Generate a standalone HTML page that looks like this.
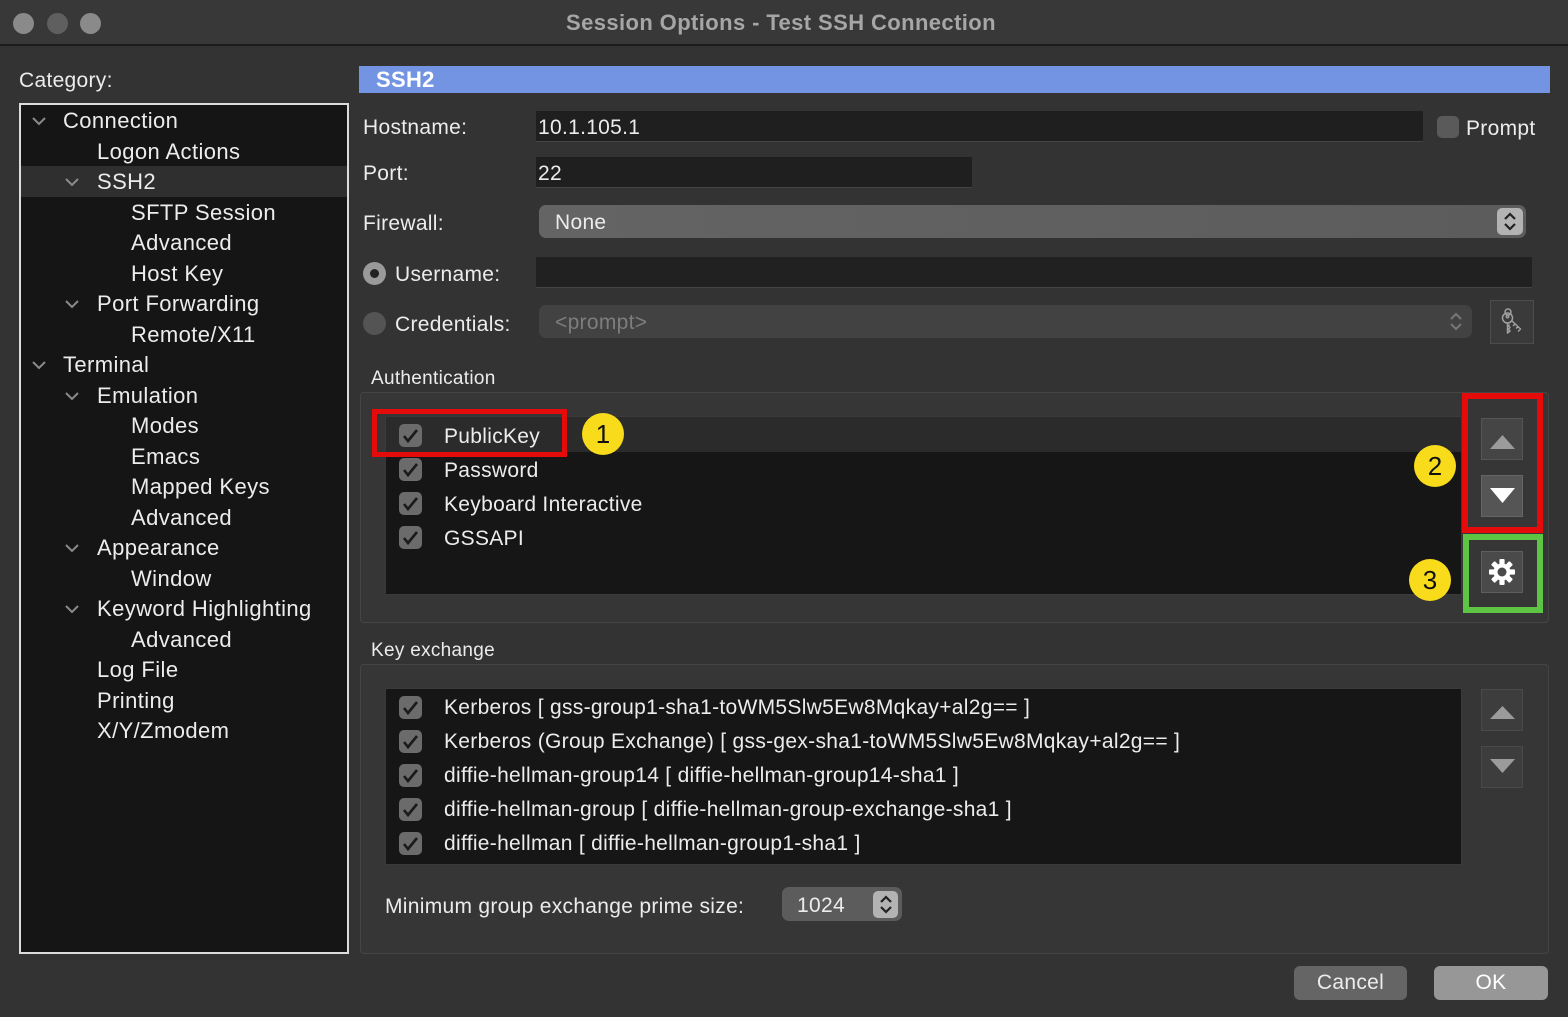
<!DOCTYPE html>
<html><head><meta charset="utf-8">
<style>
*{margin:0;padding:0;box-sizing:border-box}
body{width:1568px;height:1017px;background:#333333;font-family:"Liberation Sans",sans-serif;color:#ececec;position:relative;overflow:hidden}
.a{position:absolute}
.t{position:absolute;white-space:nowrap;font-size:21px;line-height:24px;letter-spacing:0.3px;padding-top:1px}
.tree .t{font-size:22px;letter-spacing:0.4px}
.chev{position:absolute;width:16px;height:10px}
.cb{position:absolute;width:23px;height:23px;border-radius:5px;background:#6b6b6b}
.btn{position:absolute;width:42px;height:42px;background:#454545;border:1px solid #555}
.circ{position:absolute;width:42px;height:42px;border-radius:50%;background:#f8dc1c;color:#111;font-size:26px;text-align:center;line-height:42px}
</style></head><body>
<div class="a" style="left:0;top:0;width:1568px;height:46px;background:#383838;border-bottom:2px solid #1c1c1c"></div>
<div class="a" style="left:13px;top:13px;width:21px;height:21px;border-radius:50%;background:#8a8a8a"></div>
<div class="a" style="left:47px;top:13px;width:21px;height:21px;border-radius:50%;background:#5f5f5f"></div>
<div class="a" style="left:80px;top:13px;width:21px;height:21px;border-radius:50%;background:#8a8a8a"></div>
<div class="t" style="left:566px;top:10px;font-size:22px;font-weight:bold;color:#a6a6a6;letter-spacing:0.4px">Session Options - Test SSH Connection</div>

<div class="t" style="left:19px;top:68px">Category:</div>
<div class="a tree" style="left:19px;top:103px;width:330px;height:851px;background:#151515;border:2px solid #dcdcdc"></div>
<div class="a" style="left:21px;top:166px;width:326px;height:31px;background:#2f2f2f"></div>
<div class="tree">
<svg class="chev" style="left:31px;top:116px" viewBox="0 0 16 10"><path d="M2 2l6 6 6-6" stroke="#8a8a8a" stroke-width="2" fill="none"/></svg>
<div class="t" style="left:63px;top:108px">Connection</div>
<div class="t" style="left:97px;top:139px">Logon Actions</div>
<svg class="chev" style="left:64px;top:177px" viewBox="0 0 16 10"><path d="M2 2l6 6 6-6" stroke="#8a8a8a" stroke-width="2" fill="none"/></svg>
<div class="t" style="left:97px;top:169px">SSH2</div>
<div class="t" style="left:131px;top:200px">SFTP Session</div>
<div class="t" style="left:131px;top:230px">Advanced</div>
<div class="t" style="left:131px;top:261px">Host Key</div>
<svg class="chev" style="left:64px;top:299px" viewBox="0 0 16 10"><path d="M2 2l6 6 6-6" stroke="#8a8a8a" stroke-width="2" fill="none"/></svg>
<div class="t" style="left:97px;top:291px">Port Forwarding</div>
<div class="t" style="left:131px;top:322px">Remote/X11</div>
<svg class="chev" style="left:31px;top:360px" viewBox="0 0 16 10"><path d="M2 2l6 6 6-6" stroke="#8a8a8a" stroke-width="2" fill="none"/></svg>
<div class="t" style="left:63px;top:352px">Terminal</div>
<svg class="chev" style="left:64px;top:391px" viewBox="0 0 16 10"><path d="M2 2l6 6 6-6" stroke="#8a8a8a" stroke-width="2" fill="none"/></svg>
<div class="t" style="left:97px;top:383px">Emulation</div>
<div class="t" style="left:131px;top:413px">Modes</div>
<div class="t" style="left:131px;top:444px">Emacs</div>
<div class="t" style="left:131px;top:474px">Mapped Keys</div>
<div class="t" style="left:131px;top:505px">Advanced</div>
<svg class="chev" style="left:64px;top:543px" viewBox="0 0 16 10"><path d="M2 2l6 6 6-6" stroke="#8a8a8a" stroke-width="2" fill="none"/></svg>
<div class="t" style="left:97px;top:535px">Appearance</div>
<div class="t" style="left:131px;top:566px">Window</div>
<svg class="chev" style="left:64px;top:604px" viewBox="0 0 16 10"><path d="M2 2l6 6 6-6" stroke="#8a8a8a" stroke-width="2" fill="none"/></svg>
<div class="t" style="left:97px;top:596px">Keyword Highlighting</div>
<div class="t" style="left:131px;top:627px">Advanced</div>
<div class="t" style="left:97px;top:657px">Log File</div>
<div class="t" style="left:97px;top:688px">Printing</div>
<div class="t" style="left:97px;top:718px">X/Y/Zmodem</div>
</div>

<div class="a" style="left:359px;top:66px;width:1191px;height:27px;background:#7394e2"></div>
<div class="t" style="left:376px;top:67px;font-weight:bold;font-size:22px;color:#fff">SSH2</div>

<div class="t" style="left:363px;top:115px">Hostname:</div>
<div class="a" style="left:536px;top:111px;width:887px;height:31px;background:#1f1f1f;border-bottom:1px solid #444"></div>
<div class="t" style="left:538px;top:115px">10.1.105.1</div>
<div class="a" style="left:1437px;top:116px;width:22px;height:22px;border-radius:5px;background:#5a5a5a"></div>
<div class="t" style="left:1466px;top:116px">Prompt</div>

<div class="t" style="left:363px;top:161px">Port:</div>
<div class="a" style="left:536px;top:157px;width:436px;height:31px;background:#1f1f1f;border-bottom:1px solid #444"></div>
<div class="t" style="left:538px;top:161px">22</div>

<div class="t" style="left:363px;top:211px">Firewall:</div>
<div class="a" style="left:539px;top:205px;width:987px;height:33px;border-radius:7px;background:linear-gradient(90deg,#646464,#5c5c5c)"></div>
<div class="t" style="left:555px;top:210px">None</div>
<div class="a" style="left:1497px;top:208px;width:26px;height:27px;border-radius:5px;background:#b3b3b3"></div>
<svg class="a" style="left:1501px;top:210px" width="18" height="23" viewBox="0 0 18 23"><path d="M4 9l5-5 5 5M4 14l5 5 5-5" stroke="#222" stroke-width="2.2" fill="none"/></svg>

<div class="a" style="left:363px;top:262px;width:23px;height:23px;border-radius:50%;background:#9a9a9a"></div>
<div class="a" style="left:370px;top:269px;width:9px;height:9px;border-radius:50%;background:#222"></div>
<div class="t" style="left:395px;top:262px">Username:</div>
<div class="a" style="left:536px;top:257px;width:996px;height:31px;background:#212121;border-bottom:1px solid #444"></div>

<div class="a" style="left:363px;top:312px;width:23px;height:23px;border-radius:50%;background:#545454"></div>
<div class="t" style="left:395px;top:312px">Credentials:</div>
<div class="a" style="left:539px;top:305px;width:933px;height:33px;border-radius:7px;background:#424242"></div>
<div class="t" style="left:555px;top:310px;color:#7d7d7d">&lt;prompt&gt;</div>
<svg class="a" style="left:1447px;top:310px" width="18" height="23" viewBox="0 0 18 23"><path d="M4 9l5-5 5 5M4 14l5 5 5-5" stroke="#777" stroke-width="2" fill="none"/></svg>
<div class="a" style="left:1490px;top:300px;width:44px;height:44px;background:#3a3a3a;border:1px solid #4d4d4d"></div>
<svg class="a" style="left:1497px;top:306px" width="32" height="32" viewBox="0 0 32 32" fill="none" stroke="#a0a0a0" stroke-width="1.5" stroke-linejoin="round"><circle cx="11" cy="6" r="3"/><circle cx="10.5" cy="12" r="5"/><circle cx="10.5" cy="10.5" r="1.2"/><path d="M10.5 17v10l2.5-2-1.5-2 1.5-1.5-1.5-1.5 1-1.5M14.5 14.5l9 8.5-2.5 2.5M18 18l-2 2M21 20.5l-2 2"/></svg>

<div class="t" style="left:371px;top:366px;font-size:19px">Authentication</div>
<div class="a" style="left:360px;top:392px;width:1189px;height:231px;background:#363636;border:1px solid #454545;border-radius:4px"></div>
<div class="a" style="left:385px;top:416px;width:1077px;height:179px;background:#161616;border:1px solid #3a3a3a"></div>
<div class="a" style="left:386px;top:417px;width:1075px;height:35px;background:#2b2b2b"></div>
<div class="cb" style="left:399px;top:424px"></div><div class="cb" style="left:399px;top:458px"></div><div class="cb" style="left:399px;top:492px"></div><div class="cb" style="left:399px;top:526px"></div>
<svg class="a" style="left:399px;top:424px" width="23" height="130" viewBox="0 0 23 130" fill="none" stroke="#1a1a1a" stroke-width="2.6"><path d="M5 12l4 5 9-11M5 46l4 5 9-11M5 80l4 5 9-11M5 114l4 5 9-11"/></svg>
<div class="t" style="left:444px;top:424px">PublicKey</div>
<div class="t" style="left:444px;top:458px">Password</div>
<div class="t" style="left:444px;top:492px">Keyboard Interactive</div>
<div class="t" style="left:444px;top:526px">GSSAPI</div>
<div class="a" style="left:372px;top:409px;width:195px;height:48px;border:5px solid #e50b0b"></div>
<div class="circ" style="left:582px;top:413px">1</div>

<div class="btn" style="left:1481px;top:418px"></div>
<svg class="a" style="left:1481px;top:418px" width="42" height="42" viewBox="0 0 42 42"><path d="M9 31h25L21.5 17z" fill="#9b9b9b"/></svg>
<div class="btn" style="left:1481px;top:475px;background:#555;border-color:#666"></div>
<svg class="a" style="left:1481px;top:475px" width="42" height="42" viewBox="0 0 42 42"><path d="M9 13h25L21.5 28z" fill="#fff"/></svg>
<div class="a" style="left:1462px;top:393px;width:81px;height:140px;border:6px solid #e50b0b"></div>
<div class="circ" style="left:1414px;top:445px">2</div>
<div class="btn" style="left:1481px;top:551px;background:#4a4a4a;border-color:#5e5e5e"></div>
<svg class="a" style="left:1487px;top:557px" width="30" height="30" viewBox="-15 -15 30 30"><g fill="#fff"><circle r="8.5"/><rect x="-2.6" y="-13" width="5.2" height="6" rx="1"/><rect x="-2.6" y="-13" width="5.2" height="6" rx="1" transform="rotate(45)"/><rect x="-2.6" y="-13" width="5.2" height="6" rx="1" transform="rotate(90)"/><rect x="-2.6" y="-13" width="5.2" height="6" rx="1" transform="rotate(135)"/><rect x="-2.6" y="-13" width="5.2" height="6" rx="1" transform="rotate(180)"/><rect x="-2.6" y="-13" width="5.2" height="6" rx="1" transform="rotate(225)"/><rect x="-2.6" y="-13" width="5.2" height="6" rx="1" transform="rotate(270)"/><rect x="-2.6" y="-13" width="5.2" height="6" rx="1" transform="rotate(315)"/></g><circle r="4.5" fill="#4a4a4a"/></svg>
<div class="a" style="left:1463px;top:534px;width:80px;height:79px;border:6px solid #5ec443"></div>
<div class="circ" style="left:1409px;top:559px">3</div>

<div class="t" style="left:371px;top:638px;font-size:19px">Key exchange</div>
<div class="a" style="left:360px;top:664px;width:1189px;height:290px;background:#363636;border:1px solid #454545;border-radius:4px"></div>
<div class="a" style="left:385px;top:688px;width:1077px;height:177px;background:#161616;border:1px solid #3a3a3a"></div>
<div class="cb" style="left:399px;top:696px"></div><div class="cb" style="left:399px;top:730px"></div><div class="cb" style="left:399px;top:764px"></div><div class="cb" style="left:399px;top:798px"></div><div class="cb" style="left:399px;top:832px"></div>
<svg class="a" style="left:399px;top:696px" width="23" height="160" viewBox="0 0 23 160" fill="none" stroke="#1a1a1a" stroke-width="2.6"><path d="M5 12l4 5 9-11M5 46l4 5 9-11M5 80l4 5 9-11M5 114l4 5 9-11M5 148l4 5 9-11"/></svg>
<div class="t" style="left:444px;top:695px">Kerberos [ gss-group1-sha1-toWM5Slw5Ew8Mqkay+al2g== ]</div>
<div class="t" style="left:444px;top:729px">Kerberos (Group Exchange) [ gss-gex-sha1-toWM5Slw5Ew8Mqkay+al2g== ]</div>
<div class="t" style="left:444px;top:763px">diffie-hellman-group14 [ diffie-hellman-group14-sha1 ]</div>
<div class="t" style="left:444px;top:797px">diffie-hellman-group [ diffie-hellman-group-exchange-sha1 ]</div>
<div class="t" style="left:444px;top:831px">diffie-hellman [ diffie-hellman-group1-sha1 ]</div>
<div class="btn" style="left:1481px;top:689px;background:#3d3d3d;border-color:#4a4a4a"></div>
<svg class="a" style="left:1481px;top:689px" width="42" height="42" viewBox="0 0 42 42"><path d="M9 30h25L21.5 17z" fill="#9b9b9b"/></svg>
<div class="btn" style="left:1481px;top:746px;background:#3d3d3d;border-color:#4a4a4a"></div>
<svg class="a" style="left:1481px;top:746px" width="42" height="42" viewBox="0 0 42 42"><path d="M9 13h25L21.5 27z" fill="#9b9b9b"/></svg>

<div class="t" style="left:385px;top:894px">Minimum group exchange prime size:</div>
<div class="a" style="left:782px;top:887px;width:120px;height:34px;border-radius:7px;background:#5c5c5c"></div>
<div class="t" style="left:797px;top:893px">1024</div>
<div class="a" style="left:873px;top:891px;width:25px;height:27px;border-radius:5px;background:#b3b3b3"></div>
<svg class="a" style="left:877px;top:893px" width="18" height="23" viewBox="0 0 18 23"><path d="M4 9l5-5 5 5M4 14l5 5 5-5" stroke="#222" stroke-width="2.2" fill="none"/></svg>

<div class="a" style="left:1294px;top:966px;width:113px;height:34px;border-radius:6px;background:#656565"></div>
<div class="t" style="left:1294px;top:970px;width:113px;text-align:center">Cancel</div>
<div class="a" style="left:1434px;top:966px;width:114px;height:34px;border-radius:6px;background:#979797"></div>
<div class="t" style="left:1434px;top:970px;width:114px;text-align:center;color:#fff">OK</div>
</body></html>
